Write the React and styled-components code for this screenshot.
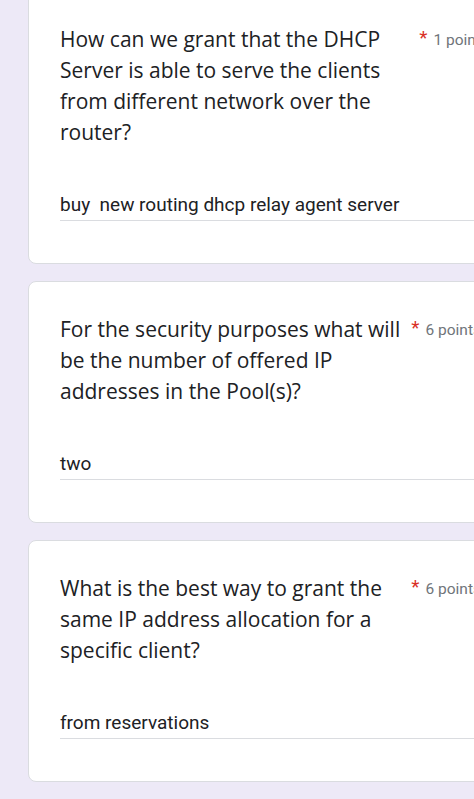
import React from "react";
import styled, { createGlobalStyle } from "styled-components";

const GlobalStyle = createGlobalStyle`
  html, body {
    margin: 0;
    padding: 0;
    background: #ede9f7;
    overflow: hidden;
  }
  body {
    font-family: "Roboto", "Liberation Sans", sans-serif;
  }
`;

const Page = styled.main`
  width: 474px;
  height: 799px;
  overflow: hidden;
  padding-left: 28px;
  box-sizing: border-box;
`;

const List = styled.div`
  display: flex;
  flex-direction: column;
  gap: 17px;
  width: 478px;
  margin-top: -9px;
`;

const Card = styled.section`
  background: #ffffff;
  border: 1px solid #dadce0;
  border-radius: 8px;
  padding: 32px 24px 42px 31px;
  box-sizing: border-box;
  display: flex;
  flex-direction: column;
`;

const Header = styled.div`
  display: flex;
  align-items: flex-start;
`;

const Title = styled.div`
  flex: 1;
  min-width: 0;
  padding-right: 4px;
  font-family: "Open Sans", "Noto Sans", sans-serif;
  font-size: 21px;
  line-height: 31px;
  color: #202124;
`;

const Meta = styled.div`
  display: flex;
  align-items: flex-start;
  gap: 6px;
  flex: none;
  padding-top: 4px;
`;

const Required = styled.span`
  color: #d93025;
  font-family: "Roboto", sans-serif;
  font-size: 19px;
  line-height: 19px;
`;

const Points = styled.span`
  color: #70757a;
  font-family: "Roboto", sans-serif;
  font-size: 15.5px;
  line-height: 20px;
  white-space: nowrap;
  padding-top: 2px;
`;

const Answer = styled.div`
  margin-top: 45px;
  font-family: "Roboto", sans-serif;
  font-size: 19px;
  line-height: 24px;
  color: #202124;
  padding-bottom: 3px;
  border-bottom: 1px solid #dadce0;
  white-space: pre;
`;

const items = [
  {
    q: "How can we grant that the DHCP Server is able to serve the clients from different network over the router?",
    pts: "1 point",
    a: "buy  new routing dhcp relay agent server",
  },
  {
    q: "For the security purposes what will be the number of offered IP addresses in the Pool(s)?",
    pts: "6 points",
    a: "two",
  },
  {
    q: "What is the best way to grant the same IP address allocation for a specific client?",
    pts: "6 points",
    a: "from reservations",
  },
];

export default function App() {
  return (
    <>
      <GlobalStyle />
      <Page>
        <List>
          {items.map((it, i) => (
            <Card key={i}>
              <Header>
                <Title>{it.q}</Title>
                <Meta>
                  <Required>*</Required>
                  <Points>{it.pts}</Points>
                </Meta>
              </Header>
              <Answer>{it.a}</Answer>
            </Card>
          ))}
        </List>
      </Page>
    </>
  );
}
